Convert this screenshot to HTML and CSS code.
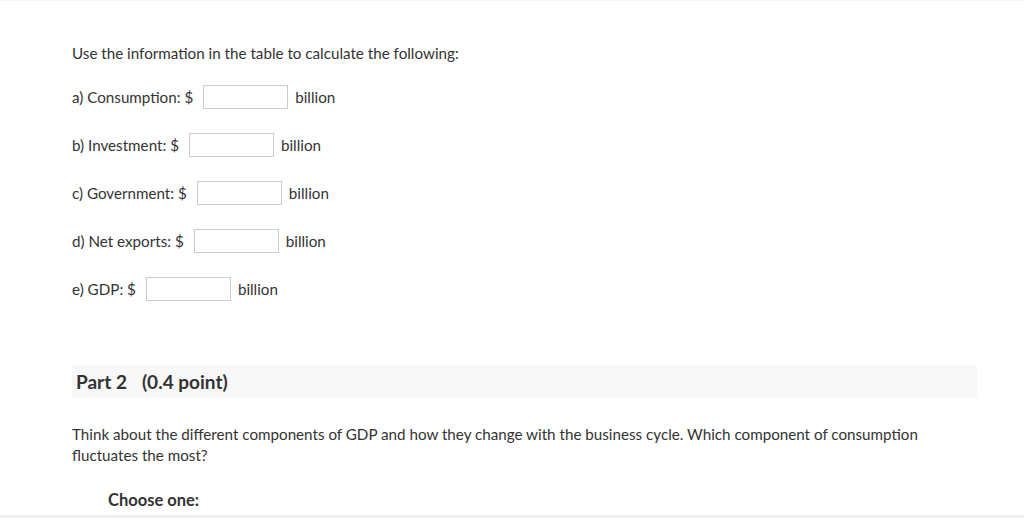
FILE: index.html
```html
<!DOCTYPE html>
<html>
<head>
<meta charset="utf-8">
<link rel="stylesheet" href="styles.css">
</head>
<body>
<div class="topline"></div>
<div class="content">
  <p class="intro">Use the information in the table to calculate the following:</p>
  <div class="row"><span class="label">a) Consumption: $</span><span class="box"></span><span class="unit">billion</span></div>
  <div class="row"><span class="label">b) Investment: $</span><span class="box"></span><span class="unit">billion</span></div>
  <div class="row"><span class="label">c) Government: $</span><span class="box"></span><span class="unit">billion</span></div>
  <div class="row"><span class="label">d) Net exports: $</span><span class="box"></span><span class="unit">billion</span></div>
  <div class="row"><span class="label">e) GDP: $</span><span class="box"></span><span class="unit">billion</span></div>
  <div class="part"><span class="part-name">Part 2</span><span class="part-points">(0.4 point)</span></div>
  <p class="question">Think about the different components of GDP and how they change with the business cycle. Which component of consumption fluctuates the most?</p>
  <div class="choose">Choose one:</div>
</div>
<div class="bottomline"></div>
</body>
</html>
```
FILE: styles.css
```css
html, body {
  margin: 0;
  padding: 0;
  background: #fff;
  height: 527px;
  overflow: hidden;
}
body {
  font-family: Lato, "Open Sans", sans-serif;
  color: #333;
  font-size: 15.2px;
  position: relative;
}
.topline {
  height: 1px;
  background: #f4f4f4;
}
.content {
  padding: 0 47px 0 72px;
}
.intro {
  margin: 0;
  padding-top: 43px;
  line-height: 18px;
}
.row {
  display: flex;
  align-items: center;
  height: 24px;
  margin-top: 24px;
}
.intro + .row { margin-top: 23px; }
.label { margin-right: 10px; }
.box {
  width: 83px;
  height: 22px;
  border: 1px solid #ccc;
  background: #fff;
  margin-right: 7px;
}
.part {
  margin-top: 64px;
  height: 32px;
  background: #f8f8f8;
  display: flex;
  align-items: center;
  padding-left: 4px;
  font-weight: bold;
  font-size: 19px;
  color: #333;
}
.part-name { margin-right: 15px; }
.question {
  margin: 27px 0 0 0;
  line-height: 21px;
  max-width: 880px;
}
.choose {
  margin-top: 24px;
  margin-left: 36px;
  font-weight: bold;
  font-size: 16.5px;
}
.bottomline {
  position: absolute;
  left: 0;
  right: 0;
  top: 515px;
  height: 3px;
  background: #efefef;
}
```
